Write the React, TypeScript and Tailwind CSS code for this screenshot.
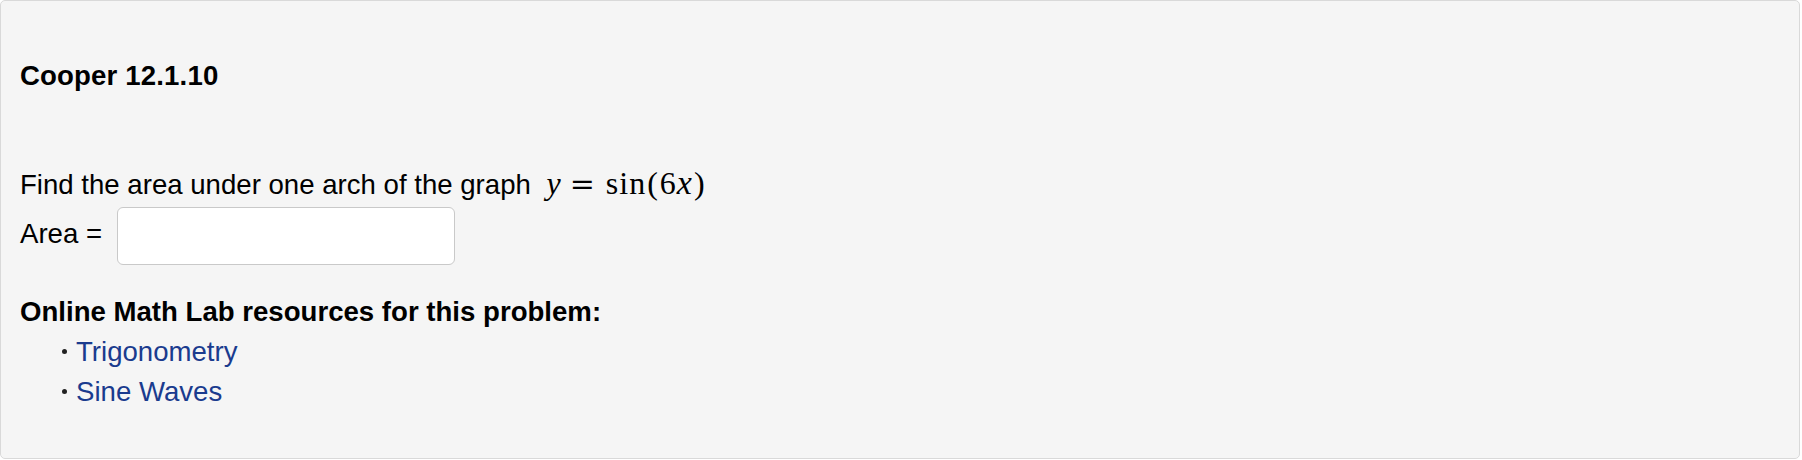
export default function App() {
  return (
    <div className="w-[1800px] h-[459px] bg-white">
      <div
        className="h-full rounded-[5px] border border-[#d9d9d9] bg-[#f5f5f5] pl-[19px] pt-[55px] text-[27.6px] leading-[40px] text-black"
        style={{ fontFamily: '"Liberation Sans", Arial, sans-serif' }}
      >
        {/* Problem title */}
        <h2 className="h-[40px] font-bold tracking-[0.15px]">Cooper 12.1.10</h2>

        {/* Problem statement */}
        <p className="mt-[67px] whitespace-nowrap">
          Find the area under one arch of the graph{" "}
          <span
            className="ml-[8px] inline-flex items-baseline text-[32px]"
            style={{ fontFamily: '"Liberation Serif", "Times New Roman", serif' }}
          >
            <i>y</i>
            <span
              className="ml-[9px] mr-[11px] text-[30px]"
              style={{ fontFamily: '"DejaVu Serif", serif' }}
            >
              =
            </span>
            <span className="tracking-[1px]">sin</span>
            <span className="ml-[1px]">(</span>
            <span className="ml-[2px]">6</span>
            <i className="ml-[1px] text-[34px]">x</i>
            <span className="ml-[2px]">)</span>
          </span>
        </p>

        {/* Answer entry */}
        <div className="mt-[2px] flex items-start">
          <label className="mt-[7px] whitespace-nowrap">Area =</label>
          <input
            type="text"
            className="ml-[15px] h-[58px] w-[338px] rounded-[6px] border-[1.5px] border-[#c9c9c9] bg-white px-3 outline-none"
          />
        </div>

        {/* Resources */}
        <h3 className="mt-[27px] font-bold">
          Online Math Lab resources for this problem:
        </h3>
        <ul className="pl-[42px]">
          <li className="flex items-center">
            <span className="mr-[9px] mt-[-1px] h-[5px] w-[5px] rounded-full bg-[#222]" />
            <a href="#" className="text-[#1a3b8e]">
              Trigonometry
            </a>
          </li>
          <li className="flex items-center">
            <span className="mr-[9px] mt-[-1px] h-[5px] w-[5px] rounded-full bg-[#222]" />
            <a href="#" className="text-[#1a3b8e]">
              Sine Waves
            </a>
          </li>
        </ul>
      </div>
    </div>
  );
}
